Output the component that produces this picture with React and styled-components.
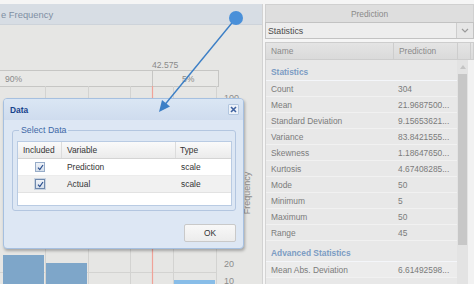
import React from 'react';
import styled, { createGlobalStyle } from 'styled-components';

const statistics = [
  ['Count', '304'],
  ['Mean', '21.9687500...'],
  ['Standard Deviation', '9.15653621...'],
  ['Variance', '83.8421555...'],
  ['Skewness', '1.18647650...'],
  ['Kurtosis', '4.67408285...'],
  ['Mode', '50'],
  ['Minimum', '5'],
  ['Maximum', '50'],
  ['Range', '45'],
];

const advanced = [['Mean Abs. Deviation', '6.61492598...']];

const variables = [
  { name: 'Prediction', type: 'scale' },
  { name: 'Actual', type: 'scale', focused: true },
];

const bars = [
  { x: 3, top: 255, fill: '#7ea6c9' },
  { x: 46, top: 263, fill: '#7ea6c9' },
  { x: 174, top: 280, fill: '#88bde8' },
];

const CHART_TOP = 25;

const Chart = () => (
  <ChartSvg width="262" height="259" viewBox="0 0 262 259">
    <rect x="0" y="0" width="262" height="259" fill="#e6e6e4" />
    <rect x="-1" y="45.5" width="153.5" height="16" fill="#e8e8e6" stroke="#c6c6c4" />
    <rect x="152.5" y="45.5" width="66" height="16" fill="#e8e8e6" stroke="#c6c6c4" />
    {[45, 88, 130, 173, 216].map(x => (
      <line key={x} x1={x + 0.5} y1="61" x2={x + 0.5} y2="259" stroke="#d3d3d1" />
    ))}
    <line x1="0" y1="247.5" x2="216" y2="247.5" stroke="#d3d3d1" />
    {bars.map(b => (
      <rect key={b.x} x={b.x} y={b.top - CHART_TOP} width="41" height={284 - b.top} fill={b.fill} />
    ))}
    <line x1="152.5" y1="61" x2="152.5" y2="259" stroke="#f0a298" strokeWidth="1.2" />
    <ChartText x="5" y="56.5">90%</ChartText>
    <ChartText x="182" y="56.5">5%</ChartText>
    <ChartText x="152" y="43">42.575</ChartText>
    <AxisText x="224" y="75.5">100</AxisText>
    <AxisText x="224" y="241.5">20</AxisText>
    <AxisText x="224" y="258.5">10</AxisText>
    <AxisText x="247" y="171" textAnchor="middle" transform="rotate(-90 247 168)">Frequency</AxisText>
  </ChartSvg>
);

const Check = () => (
  <svg width="7" height="7" viewBox="0 0 7 7">
    <path d="M1 3.6 L2.8 5.6 L6 1" fill="none" stroke="#2b4f8e" strokeWidth="1.2" />
  </svg>
);

const Pointer = () => (
  <PointerSvg width="474" height="284" viewBox="0 0 474 284">
    <line x1="236" y1="18" x2="165" y2="104.5" stroke="#3c7fc6" strokeWidth="1.4" />
    <polygon points="159,112 170,106.5 162,100" fill="#3c7fc6" />
    <circle cx="236" cy="18" r="7" fill="#4a90d9" />
  </PointerSvg>
);

const App = () => (
  <>
    <GlobalStyle />
    <Page>
      <LeftPanel>
        <TitleBar>e Frequency</TitleBar>
        <ChartArea>
          <Chart />
          <Dialog>
            <DialogHeader>
              <DialogTitle>Data</DialogTitle>
              <CloseButton>
                <svg width="7" height="7" viewBox="0 0 7 7">
                  <path d="M1 1 L6 6 M6 1 L1 6" stroke="#3f62a0" strokeWidth="1.6" />
                </svg>
              </CloseButton>
            </DialogHeader>
            <DialogBody>
              <Fieldset>
                <Legend>Select Data</Legend>
                <Grid>
                  <GridHead>
                    <HeadCell>Included</HeadCell>
                    <HeadCell>Variable</HeadCell>
                    <HeadCell $last>Type</HeadCell>
                  </GridHead>
                  {variables.map((v, i) => (
                    <GridRow key={v.name} $alt={i % 2 === 1}>
                      <CheckCell>
                        <CheckBox $focused={v.focused}><Check /></CheckBox>
                      </CheckCell>
                      <Cell>{v.name}</Cell>
                      <Cell>{v.type}</Cell>
                    </GridRow>
                  ))}
                </Grid>
              </Fieldset>
              <ButtonRow>
                <OkButton>OK</OkButton>
              </ButtonRow>
            </DialogBody>
          </Dialog>
        </ChartArea>
      </LeftPanel>

      <RightPanel>
        <PanelTitle>Prediction</PanelTitle>
        <Select>
          <SelectValue>Statistics</SelectValue>
          <SelectArrow>
            <svg width="8" height="5" viewBox="0 0 8 5">
              <path d="M1 1 L4 4 L7 1" fill="none" stroke="#9a9a9a" strokeWidth="1.2" />
            </svg>
          </SelectArrow>
        </Select>
        <Table>
          <HeadRow>
            <ColHead>Name</ColHead>
            <ColHead>Prediction</ColHead>
            <ColHead />
          </HeadRow>
          <TableBody>
            <Rows>
              <GroupRow>Statistics</GroupRow>
              {statistics.map(([name, value]) => (
                <StatRow key={name}>
                  <StatName>{name}</StatName>
                  <StatValue>{value}</StatValue>
                </StatRow>
              ))}
              <GroupRow>Advanced Statistics</GroupRow>
              {advanced.map(([name, value]) => (
                <StatRow key={name} $light>
                  <StatName>{name}</StatName>
                  <StatValue>{value}</StatValue>
                </StatRow>
              ))}
            </Rows>
            <Scrollbar>
              <ScrollUp>
                <svg width="6" height="4" viewBox="0 0 6 4">
                  <path d="M0 4 L3 0 L6 4 Z" fill="#c4c4c4" />
                </svg>
              </ScrollUp>
              <Thumb />
            </Scrollbar>
            <Gutter />
          </TableBody>
        </Table>
      </RightPanel>
      <Pointer />
    </Page>
  </>
);

const GlobalStyle = createGlobalStyle`
  body {
    margin: 0;
    background: #f5f5f5;
    font-family: "Liberation Sans", Arial, sans-serif;
    font-size: 8.4px;
  }
`;

const Page = styled.div`
  position: relative;
  width: 474px;
  height: 284px;
  padding-top: 4px;
  box-sizing: border-box;
  display: flex;
  gap: 2px;
  overflow: hidden;
  background: #f5f5f5;
`;

const LeftPanel = styled.section`
  width: 263px;
  display: flex;
  flex-direction: column;
  border-right: 1px solid #d2d2d2;
  box-sizing: border-box;
`;

const TitleBar = styled.div`
  height: 20px;
  display: flex;
  align-items: center;
  padding-left: 1px;
  background: #d7dde4;
  border-bottom: 1px solid #cdd3da;
  color: #7f8fa3;
  font-size: 9.4px;
`;

const ChartArea = styled.div`
  position: relative;
  flex: 1;
  background: #e6e6e4;
`;

const ChartSvg = styled.svg`
  display: block;
`;

const ChartText = styled.text`
  font-family: "Liberation Sans", Arial, sans-serif;
  font-size: 8.6px;
  fill: #8a8a8a;
`;

const AxisText = styled.text`
  font-family: "Liberation Sans", Arial, sans-serif;
  font-size: 9px;
  fill: #8c8c8c;
`;

const Dialog = styled.div`
  position: absolute;
  left: 3px;
  top: 73px;
  width: 241px;
  height: 151px;
  box-sizing: border-box;
  display: flex;
  flex-direction: column;
  border: 1px solid #a6c0e0;
  border-radius: 4px;
  background: #dde7f4;
  box-shadow: 1px 2px 3px rgba(0, 0, 0, 0.28);
  overflow: hidden;
`;

const DialogHeader = styled.div`
  height: 21px;
  flex: none;
  display: flex;
  align-items: center;
  justify-content: space-between;
  padding: 0 4px 0 6px;
  background: linear-gradient(#dae6f4, #cfdcee);
`;

const DialogTitle = styled.span`
  color: #15428b;
  font-weight: bold;
`;

const CloseButton = styled.span`
  width: 9px;
  height: 9px;
  display: flex;
  align-items: center;
  justify-content: center;
  border: 1px solid #b2c6df;
  border-radius: 1px;
  background: #edf2f9;
`;

const DialogBody = styled.div`
  flex: 1;
  display: flex;
  flex-direction: column;
  padding: 5px 7px 6px 8px;
`;

const Fieldset = styled.fieldset`
  margin: 0;
  padding: 6px 3px 4px 4px;
  border: 1px solid #b3c6e0;
  border-radius: 3px;
`;

const Legend = styled.legend`
  margin-left: 2px;
  padding: 0 2px;
  color: #3d68a6;
  line-height: 10px;
  font-size: 8.8px;
`;

const Grid = styled.div`
  height: 63px;
  border: 1px solid #b9cbe3;
  background: #fff;
  color: #333;
`;

const GridHead = styled.div`
  height: 17px;
  display: grid;
  grid-template-columns: 44px 114px 1fr;
  background: linear-gradient(#fafafa, #ebebeb);
  border-bottom: 1px solid #d4d4d4;
  box-sizing: border-box;
`;

const HeadCell = styled.div`
  display: flex;
  align-items: center;
  padding-left: ${p => (p.$last ? 4 : 5)}px;
  border-right: ${p => (p.$last ? 'none' : '1px solid #dcdcdc')};
`;

const GridRow = styled.div`
  height: 17px;
  display: grid;
  grid-template-columns: 44px 114px 1fr;
  box-sizing: border-box;
  background: ${p => (p.$alt ? '#f1f1f1' : '#fff')};
  border-bottom: 1px solid ${p => (p.$alt ? '#e2e2e2' : '#ececec')};
`;

const Cell = styled.div`
  display: flex;
  align-items: center;
  padding-left: 5px;
`;

const CheckCell = styled.div`
  display: flex;
  align-items: center;
  justify-content: center;
`;

const CheckBox = styled.span`
  width: 8px;
  height: 8px;
  display: flex;
  align-items: center;
  justify-content: center;
  border: 1px solid ${p => (p.$focused ? '#6f89ad' : '#97acc8')};
  background: linear-gradient(#eef2f8, #d6dfeb);
  box-shadow: ${p => (p.$focused ? '0 0 0 1px #c9d3e0' : 'none')};
`;

const ButtonRow = styled.div`
  margin-top: auto;
  display: flex;
  justify-content: flex-end;
`;

const OkButton = styled.button`
  width: 52px;
  height: 18px;
  padding: 0;
  border: 1px solid #c9c9c9;
  border-radius: 2px;
  background: linear-gradient(#f8f8f8, #ececec);
  color: #333;
  font-family: inherit;
  font-size: 8.4px;
`;

const RightPanel = styled.section`
  flex: 1;
  display: flex;
  flex-direction: column;
  min-width: 0;
`;

const PanelTitle = styled.div`
  height: 18px;
  display: flex;
  align-items: center;
  justify-content: center;
  background: #dedede;
  border: 1px solid #d0d0d0;
  border-bottom: none;
  box-sizing: border-box;
  color: #8a8a8a;
`;

const Select = styled.div`
  height: 17px;
  display: flex;
  border: 1px solid #c2c2c2;
  box-sizing: border-box;
  background: #ededed;
`;

const SelectValue = styled.div`
  flex: 1;
  display: flex;
  align-items: center;
  padding-left: 2px;
  color: #4a4a4a;
  font-size: 8.8px;
`;

const SelectArrow = styled.div`
  width: 16px;
  display: flex;
  align-items: center;
  justify-content: center;
  border-left: 1px solid #cdcdcd;
  background: #e6e6e6;
`;

const Table = styled.div`
  flex: 1;
  margin-top: 3px;
  display: flex;
  flex-direction: column;
  min-height: 0;
`;

const HeadRow = styled.div`
  height: 18px;
  flex: none;
  display: grid;
  grid-template-columns: 128px 64px 13px;
  background: linear-gradient(#e4e4e4, #dadada);
  border: 1px solid #cdcdcd;
  box-sizing: border-box;
`;

const ColHead = styled.div`
  display: flex;
  align-items: center;
  padding-left: 5px;
  border-right: 1px solid #cdcdcd;
  color: #8a8a8a;
`;

const TableBody = styled.div`
  flex: 1;
  display: flex;
  min-height: 0;
  overflow: hidden;
`;

const Rows = styled.div`
  width: 192px;
  flex: none;
  background: #e8e8e8;
  border-left: 1px solid #d4d4d4;
  box-sizing: border-box;
`;

const GroupRow = styled.div`
  height: 21px;
  display: flex;
  align-items: flex-end;
  padding: 0 0 3px 5px;
  box-sizing: border-box;
  border-bottom: 1px solid #f4f6fa;
  color: #7c9cc3;
  font-weight: bold;
`;

const StatRow = styled.div`
  height: 16px;
  display: grid;
  grid-template-columns: 127px 1fr;
  box-sizing: border-box;
  border-bottom: 1px solid #f1f1f1;
  background: ${p => (p.$light ? '#ececec' : '#e8e8e8')};
  color: #7b7b7b;
`;

const StatName = styled.div`
  display: flex;
  align-items: center;
  padding-left: 5px;
`;

const StatValue = styled.div`
  display: flex;
  align-items: center;
  padding-left: 5px;
`;

const Scrollbar = styled.div`
  width: 11px;
  flex: none;
  display: flex;
  flex-direction: column;
  background: #e3e3e3;
`;

const ScrollUp = styled.div`
  height: 14px;
  display: flex;
  align-items: center;
  justify-content: center;
`;

const Thumb = styled.div`
  height: 171px;
  margin: 0 1px 0 1px;
  background: #c7c7c7;
`;

const Gutter = styled.div`
  flex: 1;
  background: #f2f2f2;
`;

const PointerSvg = styled.svg`
  position: absolute;
  left: 0;
  top: 0;
  pointer-events: none;
`;

export default App;
